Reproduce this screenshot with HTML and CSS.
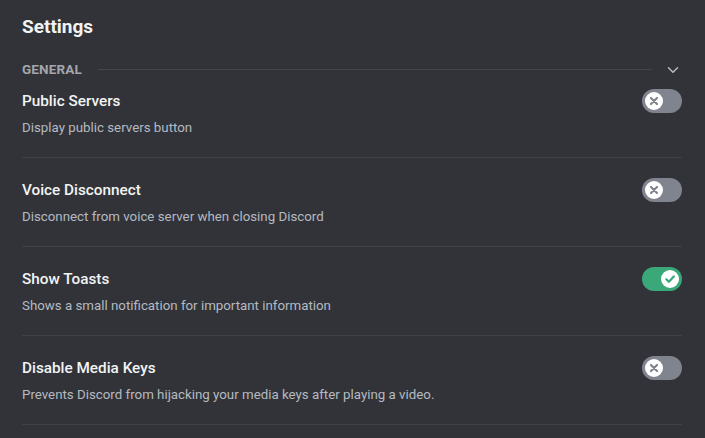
FILE: index.html
```html
<!DOCTYPE html>
<html>
<head>
<meta charset="utf-8">
<link rel="stylesheet" href="styles.css">
</head>
<body>
<div class="page">
  <h1 class="title">Settings</h1>
  <div class="section-head">
    <span class="section-label">General</span>
    <span class="section-line"></span>
    <svg class="chevron" width="14" height="14" viewBox="0 0 14 14"><path d="M2.5 4.8 L7 9.3 L11.5 4.8" fill="none" stroke="#b5bac1" stroke-width="1.5" stroke-linecap="round" stroke-linejoin="round"/></svg>
  </div>

  <div class="row">
    <div class="row-top">
      <span class="row-title">Public Servers</span>
      <span class="toggle off"><span class="knob"><svg width="18" height="18" viewBox="0 0 18 18"><path d="M6 6 L12 12 M12 6 L6 12" stroke="#80848e" stroke-width="2.2" stroke-linecap="round"/></svg></span></span>
    </div>
    <div class="row-desc">Display public servers button</div>
  </div>

  <div class="row">
    <div class="row-top">
      <span class="row-title">Voice Disconnect</span>
      <span class="toggle off"><span class="knob"><svg width="18" height="18" viewBox="0 0 18 18"><path d="M6 6 L12 12 M12 6 L6 12" stroke="#80848e" stroke-width="2.2" stroke-linecap="round"/></svg></span></span>
    </div>
    <div class="row-desc">Disconnect from voice server when closing Discord</div>
  </div>

  <div class="row">
    <div class="row-top">
      <span class="row-title">Show Toasts</span>
      <span class="toggle on"><span class="knob"><svg width="18" height="18" viewBox="0 0 18 18"><path d="M5.3 9.3 L7.9 11.8 L12.8 6.4" fill="none" stroke="#3ba879" stroke-width="2.2" stroke-linecap="round" stroke-linejoin="round"/></svg></span></span>
    </div>
    <div class="row-desc">Shows a small notification for important information</div>
  </div>

  <div class="row">
    <div class="row-top">
      <span class="row-title">Disable Media Keys</span>
      <span class="toggle off"><span class="knob"><svg width="18" height="18" viewBox="0 0 18 18"><path d="M6 6 L12 12 M12 6 L6 12" stroke="#80848e" stroke-width="2.2" stroke-linecap="round"/></svg></span></span>
    </div>
    <div class="row-desc">Prevents Discord from hijacking your media keys after playing a video.</div>
  </div>
</div>
</body>
</html>
```

FILE: styles.css
```css
html, body {
  margin: 0;
  padding: 0;
  background: #313338;
  height: 100%;
  overflow: hidden;
}
.page {
  padding: 15px 23px 0 22px;
  font-family: Roboto, "Noto Sans", sans-serif;
  color: #dbdee1;
}
.title {
  margin: 0;
  font-size: 19px;
  line-height: 24px;
  font-weight: 700;
  color: #f2f3f5;
}
.section-head {
  margin-top: 22px;
  height: 16px;
  display: flex;
  align-items: center;
  margin-bottom: 12px;
}
.section-label {
  font-size: 13.5px;
  line-height: 16px;
  font-weight: 700;
  text-transform: uppercase;
  color: #a3a6ac;
  letter-spacing: 0.01em;
}
.section-line {
  flex: 1;
  height: 1px;
  background: #42454a;
  margin: 0 14px 0 16px;
}
.chevron {
  margin-right: 2px;
  margin-top: 2px;
}
.row {
  padding-bottom: 19px;
  border-bottom: 1px solid #3f4147;
  margin-bottom: 20px;
}
.row-top {
  display: flex;
  align-items: center;
  justify-content: space-between;
  height: 24px;
}
.row-title {
  font-size: 15.3px;
  line-height: 24px;
  font-weight: 500;
  color: #f2f3f5;
}
.row-desc {
  margin-top: 5px;
  font-size: 13.3px;
  line-height: 20px;
  color: #b5bac1;
}
.toggle {
  width: 40px;
  height: 24px;
  border-radius: 12px;
  display: flex;
  align-items: center;
  padding: 0 3px;
  box-sizing: border-box;
}
.toggle.off {
  background: #80848e;
  justify-content: flex-start;
}
.toggle.on {
  background: #3ba879;
  justify-content: flex-end;
}
.knob {
  width: 18px;
  height: 18px;
  border-radius: 50%;
  background: #ffffff;
  display: block;
}
.knob svg {
  display: block;
}
```
